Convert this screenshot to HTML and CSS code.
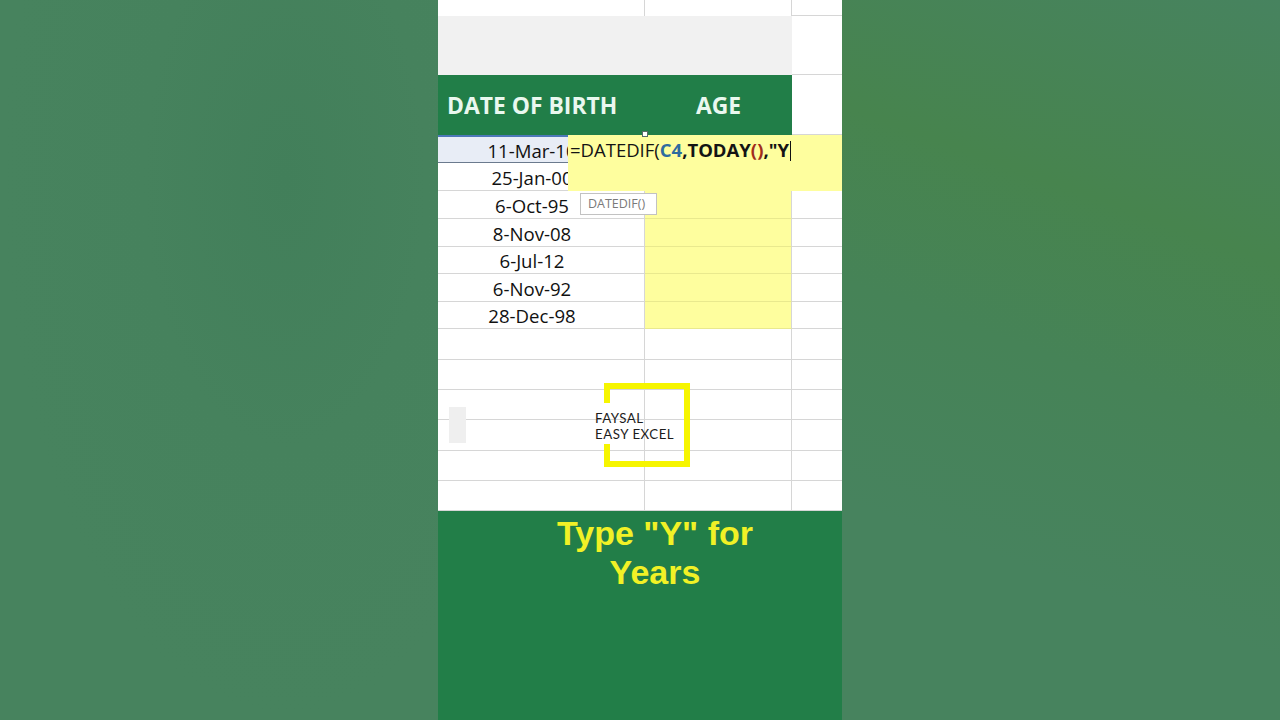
FILE: index.html
```html
<!DOCTYPE html>
<html lang="en">
<head>
<meta charset="utf-8">
<title>DATEDIF - Type Y for Years</title>
<link rel="stylesheet" href="styles.css">
</head>
<body>
<div class="page">
  <div class="side side-left"></div>
  <main class="panel">
    <div class="sheet">
      <!-- row 0 -->
      <div class="c a plain-top"></div>
      <div class="c b plain-top"></div>
      <div class="c cc"></div>
      <!-- row 1 -->
      <div class="band"></div>
      <div class="c cc"></div>
      <!-- row 2 -->
      <div class="hdr hdr-a">DATE OF BIRTH</div>
      <div class="hdr hdr-b">AGE</div>
      <div class="c cc"></div>
      <!-- row 3 -->
      <div class="c a date ref">11-Mar-10</div>
      <div class="c b yel"></div>
      <div class="c cc yel"></div>
      <!-- row 4 -->
      <div class="c a date">25-Jan-00</div>
      <div class="c b yel"></div>
      <div class="c cc yel"></div>
      <!-- rows 5-9 -->
      <div class="c a date">6-Oct-95</div>
      <div class="c b yel"></div>
      <div class="c cc"></div>
      <div class="c a date">8-Nov-08</div>
      <div class="c b yel"></div>
      <div class="c cc"></div>
      <div class="c a date">6-Jul-12</div>
      <div class="c b yel"></div>
      <div class="c cc"></div>
      <div class="c a date">6-Nov-92</div>
      <div class="c b yel"></div>
      <div class="c cc"></div>
      <div class="c a date">28-Dec-98</div>
      <div class="c b yel"></div>
      <div class="c cc"></div>
      <!-- rows 10-15 -->
      <div class="c a"></div><div class="c b"></div><div class="c cc"></div>
      <div class="c a"></div><div class="c b"></div><div class="c cc"></div>
      <div class="c a"></div><div class="c b"></div><div class="c cc"></div>
      <div class="c a"></div><div class="c b"></div><div class="c cc"></div>
      <div class="c a"></div><div class="c b"></div><div class="c cc"></div>
      <div class="c a"></div><div class="c b"></div><div class="c cc"></div>
    </div>

    <div class="editbox"><span class="f-reg">=DATEDIF(</span><span class="f-ref">C4</span><span class="f-b">,TODAY</span><span class="f-par">()</span><span class="f-b">,"Y</span><span class="caret"></span></div>
    <div class="handle"></div>
    <div class="tip">DATEDIF()</div>
    <div class="ghost"></div>
    <svg class="wm-box" width="87" height="85" viewBox="0 0 87 85" aria-hidden="true">
      <path d="M3 20 V3 H83 V81 H3 V61" fill="none" stroke="#f6f500" stroke-width="6"/>
    </svg>
    <div class="wm-text"><span>FAYSAL</span><span>EASY EXCEL</span></div>

    <footer class="caption">
      <p>Type "Y" for<br>Years</p>
    </footer>
  </main>
  <div class="side side-right"></div>
</div>
</body>
</html>
```

FILE: styles.css
```css
* { box-sizing: border-box; }
html, body { margin: 0; padding: 0; }
body {
  width: 1280px;
  height: 720px;
  overflow: hidden;
  font-family: "Open Sans", "DejaVu Sans", sans-serif;
}
.page {
  display: flex;
  width: 1280px;
  height: 720px;
}
.side { width: 438px; height: 720px; }
.side-left {
  background: radial-gradient(ellipse at 65% 25%, #427f5a 0%, #46825d 35%, #47835e 70%);
}
.side-right {
  background: linear-gradient(200deg, #47835f 0%, #47844e 30%, #468357 50%, #47835e 75%);
}
.panel {
  position: relative;
  width: 404px;
  height: 720px;
  overflow: hidden;
  background: #fff;
  display: flex;
  flex-direction: column;
}
.sheet {
  display: grid;
  grid-template-columns: 207px 147px 50px;
  grid-template-rows: 16px 59px 60px 28px 28px 28px 28px 27px 28px 27px 31px 30px 30px 31px 30px 30px;
  height: 511px;
  flex: none;
}
.c {
  border-right: 1px solid #d6d6d6;
  border-bottom: 1px solid #d6d6d6;
  background: #fff;
}
.cc { border-right: none; }
.plain-top { border-bottom: none; }
.band {
  grid-column: span 2;
  background: #f1f1f1;
}
.hdr {
  background: #217e48;
  color: #eaf8ef;
  font-family: "Open Sans", sans-serif;
  font-weight: 700;
  font-size: 22.9px;
  display: flex;
  align-items: center;
}
.hdr-a { padding-left: 9px; }
.hdr-b { justify-content: center; }
.date {
  font-family: "Open Sans", sans-serif;
  font-size: 18.6px;
  color: #111;
  display: flex;
  align-items: center;
  justify-content: center;
  padding-right: 18px;
  padding-top: 1px;
  white-space: nowrap;
  overflow: hidden;
}
.ref {
  background: #e8edf6;
  border-top: 2px solid #4d78b8;
  border-bottom: 1px solid #6b7a8e;
}
.yel {
  background: #fefe9e;
  border-bottom-color: #e9e98e;
}
.editbox {
  position: absolute;
  left: 130px;
  top: 135px;
  width: 280px;
  height: 56px;
  background: #fefe9e;
  padding: 2px 0 0 2px;
  font-family: "Open Sans", sans-serif;
  font-size: 18.5px;
  line-height: 26px;
  color: #141414;
  white-space: nowrap;
  display: flex;
  align-items: flex-start;
}
.f-reg { font-weight: 400; }
.f-ref { font-weight: 700; color: #2e6c9f; }
.f-b { font-weight: 700; }
.f-par { font-weight: 700; color: #a12d1c; }
.caret {
  display: inline-block;
  width: 1px;
  height: 20px;
  margin-top: 4px;
  margin-left: 1px;
  background: #111;
}
.handle {
  position: absolute;
  left: 204px;
  top: 131px;
  width: 6px;
  height: 6px;
  background: #fff;
  border: 1px solid #5a6b66;
}
.tip {
  position: absolute;
  left: 142px;
  top: 193px;
  width: 77px;
  height: 22px;
  background: #fff;
  border: 1px solid #c2c2c2;
  color: #7a7a7a;
  font-family: "Open Sans", sans-serif;
  font-size: 12.5px;
  line-height: 20px;
  padding-left: 7px;
}
.ghost {
  position: absolute;
  left: 11px;
  top: 407px;
  width: 17px;
  height: 36px;
  background: #efefef;
}
.wm-box {
  position: absolute;
  left: 166px;
  top: 383px;
}
.wm-text {
  position: absolute;
  left: 157px;
  top: 410px;
  display: flex;
  flex-direction: column;
  font-family: Lato, "Open Sans", sans-serif;
  font-size: 13.3px;
  letter-spacing: 0.5px;
  line-height: 16px;
  color: #1c1c1c;
  white-space: nowrap;
}
.wm-text span { display: block; height: 16px; }
.caption {
  flex: 1;
  background: #227e48;
  display: flex;
  justify-content: center;
}
.caption p {
  margin: 0;
  padding: 3px 0 0 30px;
  text-align: center;
  font-family: "Liberation Sans", Arial, sans-serif;
  font-weight: 700;
  font-size: 34px;
  line-height: 39px;
  color: #f1f126;
}
```
